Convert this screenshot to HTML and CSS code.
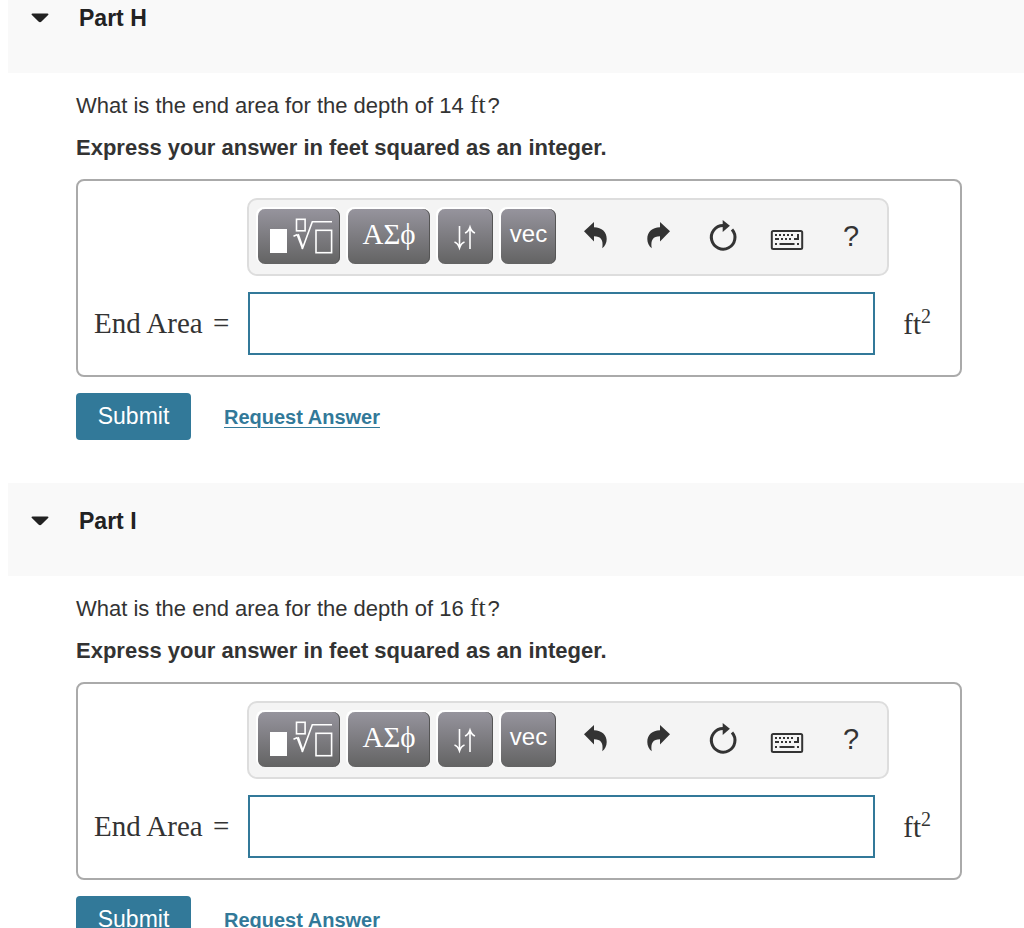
FILE: index.html
```html
<!DOCTYPE html>
<html lang="en">
<head>
    <meta charset="UTF-8">
    <meta name="viewport" content="width=device-width, initial-scale=1.0">
    <title>End Area</title>
    <link rel="stylesheet" href="styles.css">
</head>
<body>
    <!-- Shared toolbar icons -->
    <svg class="icon-defs" width="0" height="0" aria-hidden="true">
        <symbol id="icon-root" viewBox="0 0 82 55">
            <rect x="12" y="20" width="17" height="24" fill="#fff"/>
            <g fill="none" stroke="#fff" stroke-width="1.6">
                <rect x="38.5" y="10.3" width="8.6" height="11.5"/>
                <path d="M35.5 27.2l4-1.7"/>
                <path d="M44.3 40L54.3 12.8H74"/>
                <rect x="58" y="21.3" width="15.6" height="22.4"/>
            </g>
            <path d="M38.5 26l2.4-1.2 4.2 12-1 4z" fill="#fff"/>
        </symbol>
        <symbol id="icon-arrows" viewBox="0 0 55 55">
            <g fill="none" stroke="#fff" stroke-width="1.6">
                <path d="M21.5 17v22M16.5 33c3 1 4 3 5 6 1-3 2-5 5-6"/>
                <path d="M32 40V18M27 24c3-1 4-3 5-6 1 3 2 5 5 6"/>
            </g>
        </symbol>
        <symbol id="icon-undo" viewBox="0 0 34 34">
            <path d="M6 12.3L16 3v5.3c8 .2 12.7 4.7 12.7 11.7 0 4-1.700 7-4.400 9.300C25.500 21 23 17.300 16 17.300v5.200z"/>
        </symbol>
        <symbol id="icon-redo" viewBox="0 0 34 34">
            <path transform="matrix(-1 0 0 1 34 0)" d="M6 12.3L16 3v5.3c8 .2 12.7 4.7 12.7 11.7 0 4-1.700 7-4.400 9.300C25.500 21 23 17.300 16 17.300v5.200z"/>
        </symbol>
        <symbol id="icon-reset" viewBox="0 0 34 34">
            <path d="M26 10.5A11.800 11.800 0 1 1 17 6.500" fill="none" stroke="currentColor" stroke-width="3"/>
            <path d="M16.700 1l7.200 5.700-7.200 6.300z"/>
        </symbol>
        <symbol id="icon-keyboard" viewBox="0 0 34 34">
            <rect x="1.800" y="12" width="30.400" height="18" rx="1.500" fill="none" stroke="currentColor" stroke-width="2"/>
            <path d="M5 15h2v2H5zM9 15h2v2H9zM13 15h2v2h-2zM17 15h2v2h-2zM21 15h2v2h-2zM27 15h2v6h-5v-2h3zM5 19h4v2H5zM11 19h2v2h-2zM15 19h2v2h-2zM19 19h2v2h-2zM5 24h2v2H5zM9.500 24h15v2h-15zM27 24h2v2h-2z"/>
        </symbol>
    </svg>

    <section class="part">
        <h2 class="part-header">
            <button type="button" class="part-toggle" aria-expanded="true">
                <svg class="caret" viewBox="0 0 18 10" aria-hidden="true"><path d="M1.500.5h15c1 0 1.300.8.600 1.500L10.500 8.600q-1.500 1.400-3 0L.9 2C.2 1.300.5.5 1.500.5z"/></svg>
                Part H
            </button>
        </h2>
        <div class="part-body">
            <p class="question">What is the end area for the depth of 14 <span class="math">ft</span>&#8202;?</p>
            <p class="instructions">Express your answer in feet squared as an integer.</p>
            <form class="answer-form">
                <div class="answer-box">
                    <div class="toolbar">
                        <button type="button" class="tool" aria-label="Templates"><svg class="tool-art" viewBox="0 0 82 55"><use href="#icon-root"/></svg></button>
                        <button type="button" class="tool greek" aria-label="Symbols">ΑΣϕ</button>
                        <button type="button" class="tool narrow" aria-label="Arrows"><svg class="tool-art" viewBox="0 0 55 55"><use href="#icon-arrows"/></svg></button>
                        <button type="button" class="tool narrow vec">vec</button>
                        <button type="button" class="icon-btn" aria-label="Undo"><svg class="icon"><use href="#icon-undo"/></svg></button>
                        <button type="button" class="icon-btn" aria-label="Redo"><svg class="icon"><use href="#icon-redo"/></svg></button>
                        <button type="button" class="icon-btn" aria-label="Reset"><svg class="icon"><use href="#icon-reset"/></svg></button>
                        <button type="button" class="icon-btn" aria-label="Keyboard shortcuts"><svg class="icon"><use href="#icon-keyboard"/></svg></button>
                        <button type="button" class="icon-btn help">?</button>
                    </div>
                    <label class="math field-label" for="answer-h">End Area <span class="equals">=</span></label>
                    <input class="answer-input" id="answer-h" type="text">
                    <span class="math unit">ft<sup>2</sup></span>
                </div>
                <div class="actions">
                    <button type="submit" class="submit-btn">Submit</button>
                    <a class="request-link" href="#">Request Answer</a>
                </div>
            </form>
        </div>
    </section>

    <section class="part">
        <h2 class="part-header">
            <button type="button" class="part-toggle" aria-expanded="true">
                <svg class="caret" viewBox="0 0 18 10" aria-hidden="true"><path d="M1.500.5h15c1 0 1.300.8.600 1.500L10.500 8.600q-1.500 1.400-3 0L.9 2C.2 1.300.5.5 1.500.5z"/></svg>
                Part I
            </button>
        </h2>
        <div class="part-body">
            <p class="question">What is the end area for the depth of 16 <span class="math">ft</span>&#8202;?</p>
            <p class="instructions">Express your answer in feet squared as an integer.</p>
            <form class="answer-form">
                <div class="answer-box">
                    <div class="toolbar">
                        <button type="button" class="tool" aria-label="Templates"><svg class="tool-art" viewBox="0 0 82 55"><use href="#icon-root"/></svg></button>
                        <button type="button" class="tool greek" aria-label="Symbols">ΑΣϕ</button>
                        <button type="button" class="tool narrow" aria-label="Arrows"><svg class="tool-art" viewBox="0 0 55 55"><use href="#icon-arrows"/></svg></button>
                        <button type="button" class="tool narrow vec">vec</button>
                        <button type="button" class="icon-btn" aria-label="Undo"><svg class="icon"><use href="#icon-undo"/></svg></button>
                        <button type="button" class="icon-btn" aria-label="Redo"><svg class="icon"><use href="#icon-redo"/></svg></button>
                        <button type="button" class="icon-btn" aria-label="Reset"><svg class="icon"><use href="#icon-reset"/></svg></button>
                        <button type="button" class="icon-btn" aria-label="Keyboard shortcuts"><svg class="icon"><use href="#icon-keyboard"/></svg></button>
                        <button type="button" class="icon-btn help">?</button>
                    </div>
                    <label class="math field-label" for="answer-i">End Area <span class="equals">=</span></label>
                    <input class="answer-input" id="answer-i" type="text">
                    <span class="math unit">ft<sup>2</sup></span>
                </div>
                <div class="actions">
                    <button type="submit" class="submit-btn">Submit</button>
                    <a class="request-link" href="#">Request Answer</a>
                </div>
            </form>
        </div>
    </section>
</body>
</html>
```
FILE: styles.css
```css
* {
    box-sizing: border-box;
}
html {
    scrollbar-width: none;
}
body {
    margin: 0 0 0 8px;
    font-family: "Liberation Sans", Arial, sans-serif;
    font-size: 22px;
    line-height: 28px;
    color: #333;
    background-color: #fff;
}
button {
    font-family: inherit;
    border: none;
    cursor: pointer;
}
.icon-defs {
    display: block;
}
.part-header {
    margin: 0;
    padding: 24px 23px 41px;
    background-color: #f9f9f9;
}
.part:first-of-type .part-header {
    padding-top: 4px;
}
.part-toggle {
    display: flex;
    align-items: center;
    gap: 30px;
    padding: 0;
    background: none;
    font-size: 23px;
    font-weight: bold;
    line-height: 28px;
    color: #222;
}
.caret {
    width: 18px;
    height: 10px;
    fill: #222;
}
.part-body {
    padding: 19px 62px 43px 68px;
}
.question {
    margin: 0 0 14px;
}
.instructions {
    margin: 0 0 17px;
    font-weight: bold;
}
.math {
    font-family: "Liberation Serif", "Times New Roman", serif;
    font-size: 29px;
    line-height: 28px;
}
.question .math {
    font-size: 26px;
    line-height: 20px;
}
.answer-box {
    display: grid;
    grid-template-columns: 138px 1fr auto;
    align-items: center;
    row-gap: 16px;
    padding: 17px 29px 20px 16px;
    border: 2px solid #aaa;
    border-radius: 8px;
}
.toolbar {
    grid-column: 2 / -1;
    justify-self: start;
    display: flex;
    align-items: center;
    height: 78px;
    margin-left: 15px;
    padding: 0 4px 2px 9px;
    border: 2px solid #ddd;
    border-radius: 10px;
    background-color: #f4f4f4;
}
.tool {
    width: 82px;
    height: 55px;
    margin-right: 8px;
    padding: 0;
    border-radius: 7px;
    background: linear-gradient(#96949d, #636363);
    box-shadow: -1px -1px 0 1px #fff, inset -1px 0 0 #555;
    color: #fff;
}
.tool.narrow {
    width: 55px;
}
.tool-art {
    display: block;
    width: 100%;
    height: 55px;
}
.tool.greek {
    padding-bottom: 4px;
    font-family: "Liberation Serif", "Times New Roman", serif;
    font-size: 29px;
}
.tool.vec {
    margin-right: 7px;
    padding-bottom: 4px;
    font-size: 24px;
}
.icon-btn {
    display: flex;
    align-items: center;
    justify-content: center;
    width: 64px;
    height: 55px;
    padding: 0;
    background: none;
    color: #333;
}
.icon {
    width: 34px;
    height: 34px;
    fill: currentColor;
}
.help {
    font-size: 29px;
}
.field-label {
    white-space: nowrap;
    padding-bottom: 2px;
}
.equals {
    margin-left: 3px;
}
.answer-input {
    width: calc(100% - 16px);
    height: 63px;
    margin-left: 16px;
    padding: 0 12px;
    border: 2px solid #327999;
    background-color: #fff;
    font-size: 24px;
    color: #333;
}
.unit {
    margin-left: 28px;
}
.unit sup {
    font-size: 20px;
    line-height: 0;
}
.actions {
    display: flex;
    align-items: center;
    gap: 33px;
    margin-top: 16px;
}
.submit-btn {
    width: 115px;
    height: 47px;
    padding: 0;
    border-radius: 4px;
    background-color: #327999;
    font-size: 23px;
    color: #fff;
}
.request-link {
    font-size: 20px;
    font-weight: bold;
    color: #327999;
    text-decoration-thickness: 1px;
    text-underline-offset: 3px;
}
```
